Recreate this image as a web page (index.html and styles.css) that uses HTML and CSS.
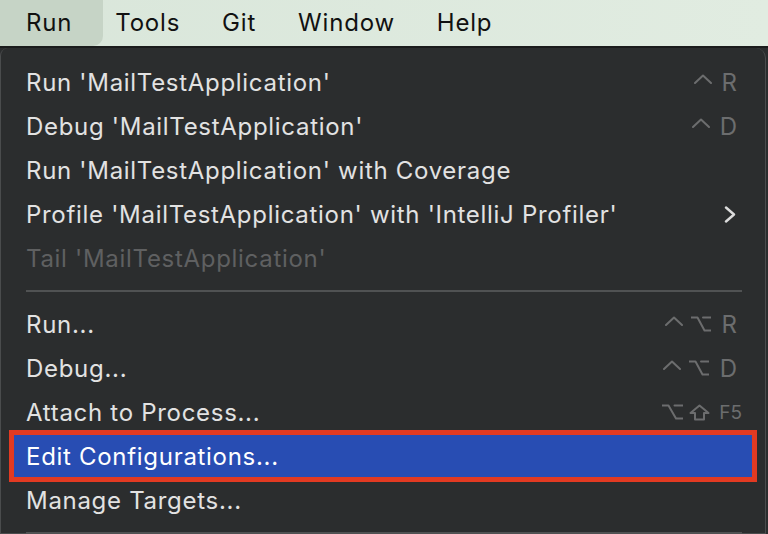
FILE: index.html
```html
<!DOCTYPE html>
<html lang="en">
<head>
  <meta charset="UTF-8" />
  <meta name="viewport" content="width=device-width, initial-scale=1.0">
  <title>Run menu</title>
  <link rel="stylesheet" href="styles.css">
</head>
<body>
  <header class="menubar">
    <span class="menubar-item active">Run</span>
    <span class="menubar-item">Tools</span>
    <span class="menubar-item">Git</span>
    <span class="menubar-item">Window</span>
    <span class="menubar-item">Help</span>
  </header>

  <div class="dropdown">
    <div class="menu-row">
      <span>Run 'MailTestApplication'</span>
      <span class="keys">
        <svg class="ctrl" width="18" height="10" viewBox="0 0 18 10"><polyline points="1,9 9,1.5 17,9"/></svg>
        <b>R</b>
      </span>
    </div>
    <div class="menu-row">
      <span>Debug 'MailTestApplication'</span>
      <span class="keys">
        <svg class="ctrl" width="18" height="10" viewBox="0 0 18 10"><polyline points="1,9 9,1.5 17,9"/></svg>
        <b>D</b>
      </span>
    </div>
    <div class="menu-row"><span>Run 'MailTestApplication' with Coverage</span></div>
    <div class="menu-row">
      <span>Profile 'MailTestApplication' with 'IntelliJ Profiler'</span>
      <svg class="chevron" width="12" height="17" viewBox="0 0 12 17"><polyline points="2,1.5 10,8.5 2,15.5"/></svg>
    </div>
    <div class="menu-row disabled"><span>Tail 'MailTestApplication'</span></div>

    <div class="separator"></div>

    <div class="menu-row">
      <span>Run...</span>
      <span class="keys">
        <svg class="ctrl" width="18" height="10" viewBox="0 0 18 10"><polyline points="1,9 9,1.5 17,9"/></svg>
        <svg class="opt" width="20" height="16" viewBox="0 0 20 16"><path d="M0 1.5H6.5L13.5 14.5H20M12 1.5H20"/></svg>
        <b>R</b>
      </span>
    </div>
    <div class="menu-row">
      <span>Debug...</span>
      <span class="keys">
        <svg class="ctrl" width="18" height="10" viewBox="0 0 18 10"><polyline points="1,9 9,1.5 17,9"/></svg>
        <svg class="opt" width="20" height="16" viewBox="0 0 20 16"><path d="M0 1.5H6.5L13.5 14.5H20M12 1.5H20"/></svg>
        <b>D</b>
      </span>
    </div>
    <div class="menu-row">
      <span>Attach to Process...</span>
      <span class="keys">
        <svg class="opt" width="21" height="16" viewBox="0 0 21 16"><path d="M0 1.5H6.5L14 14.5H21M12.5 1.5H21"/></svg>
        <svg class="shift" width="21" height="17" viewBox="0 0 21 17"><polygon points="10.5,1.5 19.5,9 15,9 15,15.5 6,15.5 6,9 1.5,9"/></svg>
        <small>F5</small>
      </span>
    </div>
    <div class="menu-row selected"><span>Edit Configurations...</span></div>
    <div class="menu-row"><span>Manage Targets...</span></div>

    <div class="separator"></div>
  </div>
</body>
</html>
```

FILE: styles.css
```css
* {
  box-sizing: border-box;
  margin: 0;
  padding: 0;
}

html, body {
  height: 100%;
}

body {
  font-family: Inter, "Liberation Sans", sans-serif;
  background-color: #2b2d2e;
  overflow: hidden;
}

.menubar {
  height: 48px;
  background: linear-gradient(90deg, #d9e6da, #e1ece1);
  display: flex;
  align-items: center;
  border-bottom: 2px solid #1b1c1c;
}

.menubar-item {
  font-size: 24px;
  letter-spacing: 0.8px;
  color: #111;
  padding: 0 21px;
  height: 46px;
  line-height: 45px;
}

.menubar-item:first-child {
  padding-left: 26px;
}

.menubar-item.active {
  background-color: #c6d4c6;
  border-radius: 0 0 10px 0;
  padding-right: 31px;
}

.menubar-item.active + .menubar-item {
  padding-left: 12px;
}

.dropdown {
  background-color: #2b2d2e;
  border: 1px solid #4a4c4d;
  border-top: none;
  border-radius: 8px 10px 0 0;
  width: 766px;
  padding: 12px 12px 0 12px;
  height: 486px;
}

.menu-row {
  height: 44px;
  display: flex;
  align-items: center;
  justify-content: space-between;
  padding: 0 16px 0 13px;
  font-size: 24px;
  letter-spacing: 0.7px;
  color: #e2e2e2;
}

.menu-row.disabled {
  color: #5f6061;
}

.menu-row.selected {
  background-color: #284db3;
  color: #fff;
  outline: 5px solid #e23a22;
  outline-offset: -1px;
}

.keys {
  color: #6c6d6e;
  display: flex;
  align-items: center;
  letter-spacing: 0;
}

.keys svg {
  fill: none;
  stroke: #6c6d6e;
  stroke-width: 2;
  stroke-linecap: round;
  stroke-linejoin: round;
}

.keys .ctrl {
  margin-right: 8px;
  margin-top: -6px;
}

.keys .opt {
  margin-right: 9px;
}

.keys .shift {
  margin-left: -3px;
  margin-right: 9px;
}

.keys b {
  font-weight: 400;
  margin-left: 2px;
}

.keys small {
  font-size: 19px;
  margin-right: -5px;
}

.chevron {
  fill: none;
  stroke: #dcdcdc;
  stroke-width: 2.4;
  stroke-linecap: round;
  stroke-linejoin: round;
  margin-right: 1px;
}

.separator {
  height: 2px;
  background-color: #505253;
  margin: 10px 0 10px 13px;
  width: 716px;
}
```
